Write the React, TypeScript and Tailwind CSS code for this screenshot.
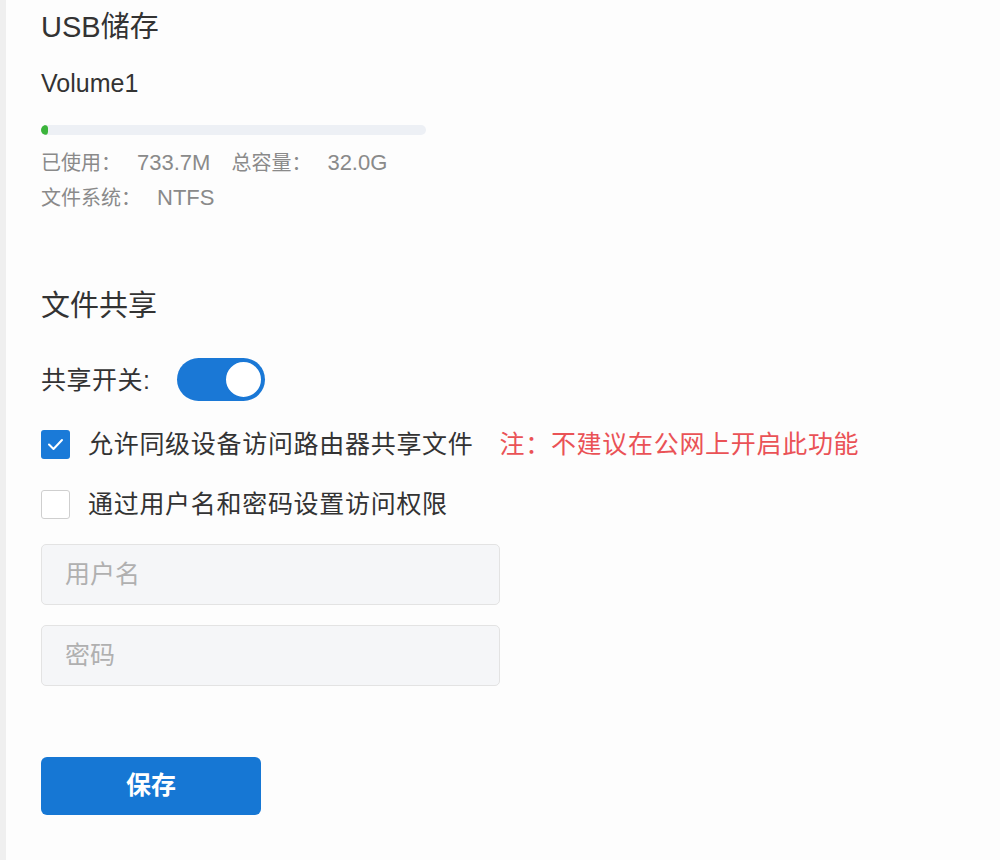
import { useState } from "react";

const FONT = "font-['Liberation_Sans','Noto_Sans_CJK_SC',sans-serif]";

function CheckRow({
  checked,
  label,
  onToggle,
  children,
}: {
  checked: boolean;
  label: string;
  onToggle: () => void;
  children?: React.ReactNode;
}) {
  return (
    <div className="flex h-[30px] items-center">
      <button
        type="button"
        onClick={onToggle}
        className={
          checked
            ? "flex h-[29px] w-[29px] items-center justify-center rounded-[3px] bg-[#1a7ad8]"
            : "h-[29px] w-[29px] rounded-[3px] border-[1.5px] border-[#cfcfcf] bg-white"
        }
      >
        {checked && (
          <svg width="17" height="13" viewBox="0 0 17 13" fill="none">
            <path d="M2 6.5L6.5 11L15 2" stroke="white" strokeWidth="2" strokeLinecap="round" strokeLinejoin="round" />
          </svg>
        )}
      </button>
      <span className="ml-[18px] text-[25px] leading-[30px] tracking-[0.7px] text-[#333]">{label}</span>
      {children}
    </div>
  );
}

export default function App() {
  const [shareOn, setShareOn] = useState(true);
  const [allowPeers, setAllowPeers] = useState(true);
  const [useAuth, setUseAuth] = useState(false);

  return (
    <div className={`${FONT} min-h-[860px] border-l-[6px] border-[#efefef] bg-[#fdfdfd] pl-[35px]`}>
      {/* USB storage */}
      <h1 className="pt-[9px] text-[29px] leading-[36px] text-[#333]">USB储存</h1>
      <div className="mt-[22px] text-[25px] leading-[32px] text-[#333]">Volume1</div>

      <div className="mt-[26px] h-[10px] w-[385px] overflow-hidden rounded-full bg-[#edf0f5]">
        <div className="h-full w-[7px] rounded-full bg-[#3bb43b]" />
      </div>

      <div className="mt-[14px] flex items-baseline text-[20px] leading-[28px] text-[#8a8a8a]">
        <span>已使用：</span>
        <span className="ml-[16px] text-[22px]">733.7M</span>
        <span className="ml-[21px]">总容量：</span>
        <span className="ml-[16px] text-[22px]">32.0G</span>
      </div>
      <div className="mt-[7px] flex items-baseline text-[20px] leading-[28px] text-[#8a8a8a]">
        <span>文件系统：</span>
        <span className="ml-[16px] text-[22px]">NTFS</span>
      </div>

      {/* File sharing */}
      <h2 className="mt-[76px] text-[29px] leading-[36px] text-[#333]">文件共享</h2>

      <div className="mt-[34px] flex h-[43px] items-center">
        <span className="text-[25px] leading-[30px] tracking-[0.5px] text-[#333]">共享开关:</span>
        <button
          type="button"
          onClick={() => setShareOn(!shareOn)}
          className={
            shareOn
              ? "ml-[27px] flex h-[43px] w-[88px] items-center justify-end rounded-full bg-[#1a78d6] p-[2px]"
              : "ml-[27px] flex h-[43px] w-[88px] items-center justify-start rounded-full bg-[#d9d9d9] p-[2px]"
          }
        >
          <span className="h-[39px] w-[39px] rounded-full border-2 border-[#1a78d6] bg-white" />
        </button>
      </div>

      <div className="mt-[28px]">
        <CheckRow checked={allowPeers} label="允许同级设备访问路由器共享文件" onToggle={() => setAllowPeers(!allowPeers)}>
          <span className="ml-[26px] text-[25px] leading-[30px] tracking-[0.7px] text-[#ea5256]">注：不建议在公网上开启此功能</span>
        </CheckRow>
      </div>
      <div className="mt-[30px]">
        <CheckRow checked={useAuth} label="通过用户名和密码设置访问权限" onToggle={() => setUseAuth(!useAuth)} />
      </div>

      <input
        placeholder="用户名"
        className="mt-[25px] block h-[61px] w-[459px] rounded-[5px] border border-[#e3e3e3] bg-[#f5f6f8] pl-[23px] text-[25px] text-[#333] outline-none placeholder:text-[#b0b0b0]"
      />
      <input
        type="password"
        placeholder="密码"
        className="mt-[20px] block h-[61px] w-[459px] rounded-[5px] border border-[#e3e3e3] bg-[#f5f6f8] pl-[23px] text-[25px] text-[#333] outline-none placeholder:text-[#b0b0b0]"
      />

      <button
        type="button"
        className="mt-[71px] block h-[58px] w-[220px] rounded-[6px] bg-[#1677d4] text-[25px] font-bold text-white"
      >
        保存
      </button>
    </div>
  );
}
